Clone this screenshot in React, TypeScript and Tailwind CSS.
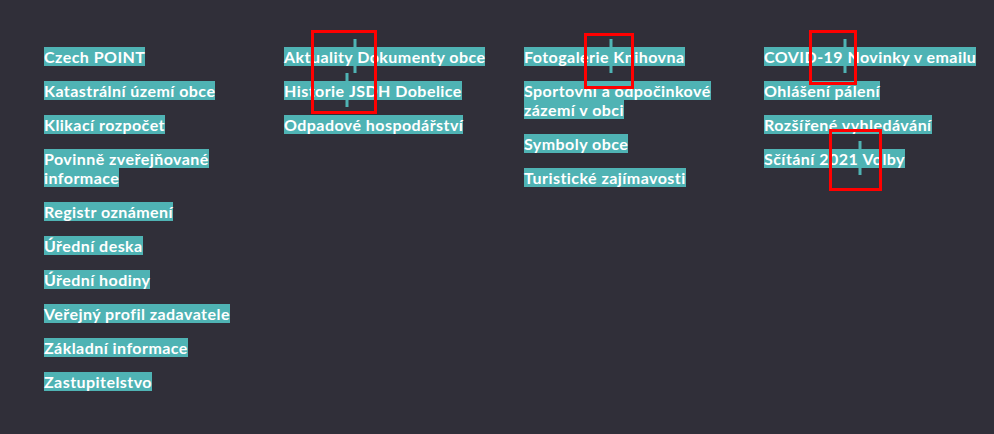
import type { ReactNode } from "react";

const teal = "bg-[#4fb3b4]";

function Sep() {
  return (
    <span className="relative">
      {" "}
      <span className="absolute left-1/2 -translate-x-1/2 top-[-8px] bottom-[-7px] w-[3px] bg-[#4fb3b4]" />
    </span>
  );
}

function Item({ children }: { children: ReactNode }) {
  return (
    <div className="mb-[15px] leading-[19px]">
      <a href="#" className={`${teal} text-white`}>{children}</a>
    </div>
  );
}

function Pair({ a, b }: { a: string; b: string }) {
  return (
    <div className="mb-[15px] leading-[19px]">
      <span className={`${teal} text-white`}>
        {a}
        <Sep />
        {b}
      </span>
    </div>
  );
}

export default function App() {
  return (
    <div
      className="relative h-[434px] w-full overflow-hidden bg-[#302f39] pt-[47px] pl-[44px] text-[16px] font-bold tracking-[0.45px]"
      style={{ fontFamily: "Lato, 'Open Sans', sans-serif" }}
    >
      <div className="flex">
        <div className="w-[240px] shrink-0">
          <Item>Czech POINT</Item>
          <Item>Katastrální území obce</Item>
          <Item>Klikací rozpočet</Item>
          <Item>Povinně zveřejňované <br />informace</Item>
          <Item>Registr oznámení</Item>
          <Item>Úřední deska</Item>
          <Item>Úřední hodiny</Item>
          <Item>Veřejný profil zadavatele</Item>
          <Item>Základní informace</Item>
          <Item>Zastupitelstvo</Item>
        </div>
        <div className="w-[240px] shrink-0">
          <Pair a="Aktuality" b="Dokumenty obce" />
          <Pair a="Historie" b="JSDH Dobelice" />
          <Item>Odpadové hospodářství</Item>
        </div>
        <div className="w-[240px] shrink-0">
          <Pair a="Fotogalerie" b="Knihovna" />
          <Item>Sportovní a odpočinkové <br />zázemí v obci</Item>
          <Item>Symboly obce</Item>
          <Item>Turistické zajímavosti</Item>
        </div>
        <div className="w-[230px] shrink-0">
          <Pair a="COVID-19" b="Novinky v emailu" />
          <Item>Ohlášení pálení</Item>
          <Item>Rozšířené vyhledávání</Item>
          <Pair a="Sčítání 2021" b="Volby" />
        </div>
      </div>

      {/* red review markers */}
      <div className="absolute left-[311px] top-[30px] h-[84px] w-[66px] border-[3px] border-[#ff0000]" />
      <div className="absolute left-[584px] top-[33px] h-[56px] w-[50px] border-[3px] border-[#ff0000]" />
      <div className="absolute left-[809px] top-[30px] h-[55px] w-[48px] border-[3px] border-[#ff0000]" />
      <div className="absolute left-[829px] top-[129px] h-[62px] w-[53px] border-[3px] border-[#ff0000]" />
    </div>
  );
}
